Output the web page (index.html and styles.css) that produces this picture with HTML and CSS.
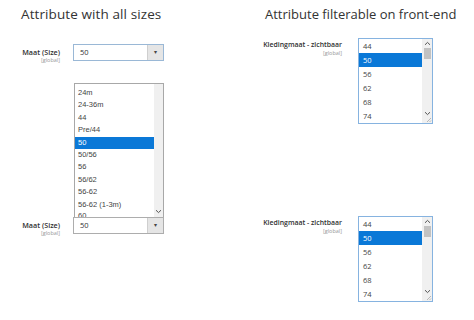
FILE: index.html
```html
<!DOCTYPE html>
<html>
<head>
<meta charset="utf-8">
<link rel="stylesheet" href="styles.css">
</head>
<body>
<div class="page">
  <section class="col col-left">
    <h2 class="title">Attribute with all sizes</h2>
    <div class="row row-1">
      <div class="field field-left">
        <div class="label"><span class="name">Maat (Size)</span><span class="scope">[global]</span></div>
        <div class="select select-focus"><span class="value">50</span><span class="arrow">&#9662;</span></div>
      </div>
    </div>
    <div class="row row-2">
      <div class="field field-left field-open">
        <div class="label"><span class="name">Maat (Size)</span><span class="scope">[global]</span></div>
        <div class="select-wrap">
          <div class="dropdown">
            <ul class="options">
              <li>24m</li>
              <li>24-36m</li>
              <li>44</li>
              <li>Pre/44</li>
              <li class="on">50</li>
              <li>50/56</li>
              <li>56</li>
              <li>56/62</li>
              <li>56-62</li>
              <li>56-62 (1-3m)</li>
              <li class="cut">60</li>
            </ul>
            <div class="dd-scroll"><svg class="chev" width="7" height="5" viewBox="0 0 7 5"><path d="M1 1.2 L3.5 3.6 L6 1.2" fill="none" stroke="#555" stroke-width="1"/></svg></div>
          </div>
          <div class="select"><span class="value">50</span><span class="arrow">&#9662;</span></div>
        </div>
      </div>
    </div>
  </section>
  <section class="col col-right">
    <h2 class="title">Attribute filterable on front-end</h2>
    <div class="row row-1">
      <div class="field field-right">
        <div class="label"><span class="name">Kledingmaat - zichtbaar</span><span class="scope">[global]</span></div>
        <div class="listbox">
          <ul class="items">
            <li>44</li><li class="on">50</li><li>56</li><li>62</li><li>68</li><li>74</li>
          </ul>
          <div class="lb-scroll">
            <svg class="chev" width="7" height="5" viewBox="0 0 7 5"><path d="M1 3.8 L3.5 1.4 L6 3.8" fill="none" stroke="#555" stroke-width="1"/></svg>
            <div class="thumb"></div>
            <div class="spacer"></div>
            <svg class="chev" width="7" height="5" viewBox="0 0 7 5"><path d="M1 1.2 L3.5 3.6 L6 1.2" fill="none" stroke="#555" stroke-width="1"/></svg>
            <svg class="grip" width="7" height="7" viewBox="0 0 7 7"><path d="M6 2 L2 6 M6 4.5 L4.5 6" stroke="#aaa" stroke-width="0.8"/></svg>
          </div>
        </div>
      </div>
    </div>
    <div class="row row-2">
      <div class="field field-right">
        <div class="label"><span class="name">Kledingmaat - zichtbaar</span><span class="scope">[global]</span></div>
        <div class="listbox">
          <ul class="items">
            <li>44</li><li class="on">50</li><li>56</li><li>62</li><li>68</li><li>74</li>
          </ul>
          <div class="lb-scroll">
            <svg class="chev" width="7" height="5" viewBox="0 0 7 5"><path d="M1 3.8 L3.5 1.4 L6 3.8" fill="none" stroke="#555" stroke-width="1"/></svg>
            <div class="thumb"></div>
            <div class="spacer"></div>
            <svg class="chev" width="7" height="5" viewBox="0 0 7 5"><path d="M1 1.2 L3.5 3.6 L6 1.2" fill="none" stroke="#555" stroke-width="1"/></svg>
            <svg class="grip" width="7" height="7" viewBox="0 0 7 7"><path d="M6 2 L2 6 M6 4.5 L4.5 6" stroke="#aaa" stroke-width="0.8"/></svg>
          </div>
        </div>
      </div>
    </div>
  </section>
</div>
</body>
</html>
```

FILE: styles.css
```css
* { box-sizing: border-box; }
html, body { margin: 0; padding: 0; background: #fff; }
body {
  width: 474px;
  height: 320px;
  overflow: hidden;
  font-family: "Open Sans", "DejaVu Sans", sans-serif;
  color: #333;
}
ul { list-style: none; margin: 0; padding: 0; }

.page {
  display: grid;
  grid-template-columns: 237px 237px;
  padding-top: 4px;
}

.col { display: flex; flex-direction: column; }

.title {
  margin: 0;
  height: 34px;
  font-family: "Open Sans", sans-serif;
  font-weight: 400;
  font-size: 13.5px;
  line-height: 20px;
  color: #333;
  letter-spacing: 0.1px;
}
.col-left .title { padding-left: 21px; }
.col-right .title { padding-left: 28px; font-size: 13px; letter-spacing: 0; }

.row-1 { height: 178px; }
.row-2 { height: 100px; }

.field { display: flex; align-items: flex-start; gap: 13px; }
.label {
  display: flex;
  flex-direction: column;
  align-items: flex-end;
  text-align: right;
}
.name { font-size: 7.2px; font-weight: 600; color: #303030; line-height: 10px; }
.scope { font-size: 5.5px; color: #999; line-height: 7px; }

.field-left .label { width: 60px; padding-top: 3px; }
.col-left .row-1 .field { padding-top: 6px; }
.col-left .row-2 .field { padding-top: 1px; }

.field-right { gap: 16px; }
.field-right .label { width: 105px; padding-top: 2px; }
.field-right .name { font-size: 6.9px; }

/* collapsed select */
.select {
  width: 91px;
  height: 17px;
  border: 1px solid #adadad;
  display: flex;
  align-items: stretch;
  background: #fff;
}
.select-focus { border-color: #9ab8d6; }
.select .value {
  flex: 1;
  font-size: 7.5px;
  line-height: 15px;
  padding-left: 6px;
  color: #333;
}
.select .arrow {
  width: 16px;
  background: #e5e5e5;
  border-left: 1px solid #cfcfcf;
  font-size: 6px;
  line-height: 15px;
  text-align: center;
  color: #444;
}

/* open dropdown */
.select-wrap { position: relative; }
.dropdown {
  position: absolute;
  left: 1px;
  bottom: 100%;
  width: 90px;
  height: 134px;
  border: 1px solid #a8a8a8;
  border-bottom: none;
  background: #fff;
  display: flex;
  overflow: hidden;
  z-index: 2;
}
.options {
  flex: 1;
  padding-top: 3px;
  font-family: "Liberation Sans", Arial, sans-serif;
  font-size: 7.5px;
  color: #444;
  overflow: hidden;
}
.options li {
  height: 12.4px;
  line-height: 12.4px;
  padding-left: 3px;
}
.options li.cut { height: 6px; line-height: 10px; overflow: hidden; }
.options li.on { background: #0a78d7; color: #fff; }
.dd-scroll {
  width: 9px;
  background: #f0f0f0;
  display: flex;
  flex-direction: column;
  justify-content: flex-end;
  align-items: center;
  padding-bottom: 3px;
}

/* listbox */
.listbox {
  width: 75px;
  height: 86px;
  border: 1px solid #86b3e0;
  display: flex;
  background: #fff;
}
.items {
  flex: 1;
  font-size: 7.5px;
  color: #444;
}
.items li {
  height: 14px;
  line-height: 14px;
  padding-left: 4px;
}
.items li.on { background: #0a78d7; color: #fff; }
.lb-scroll {
  width: 10px;
  background: #f0f0f0;
  display: flex;
  flex-direction: column;
  align-items: center;
  padding-top: 2px;
}
.lb-scroll .thumb {
  width: 7px;
  height: 11px;
  margin-top: 2px;
  background: #c2c2c2;
}
.lb-scroll .spacer { flex: 1; }
.lb-scroll .grip { align-self: flex-end; }
```
